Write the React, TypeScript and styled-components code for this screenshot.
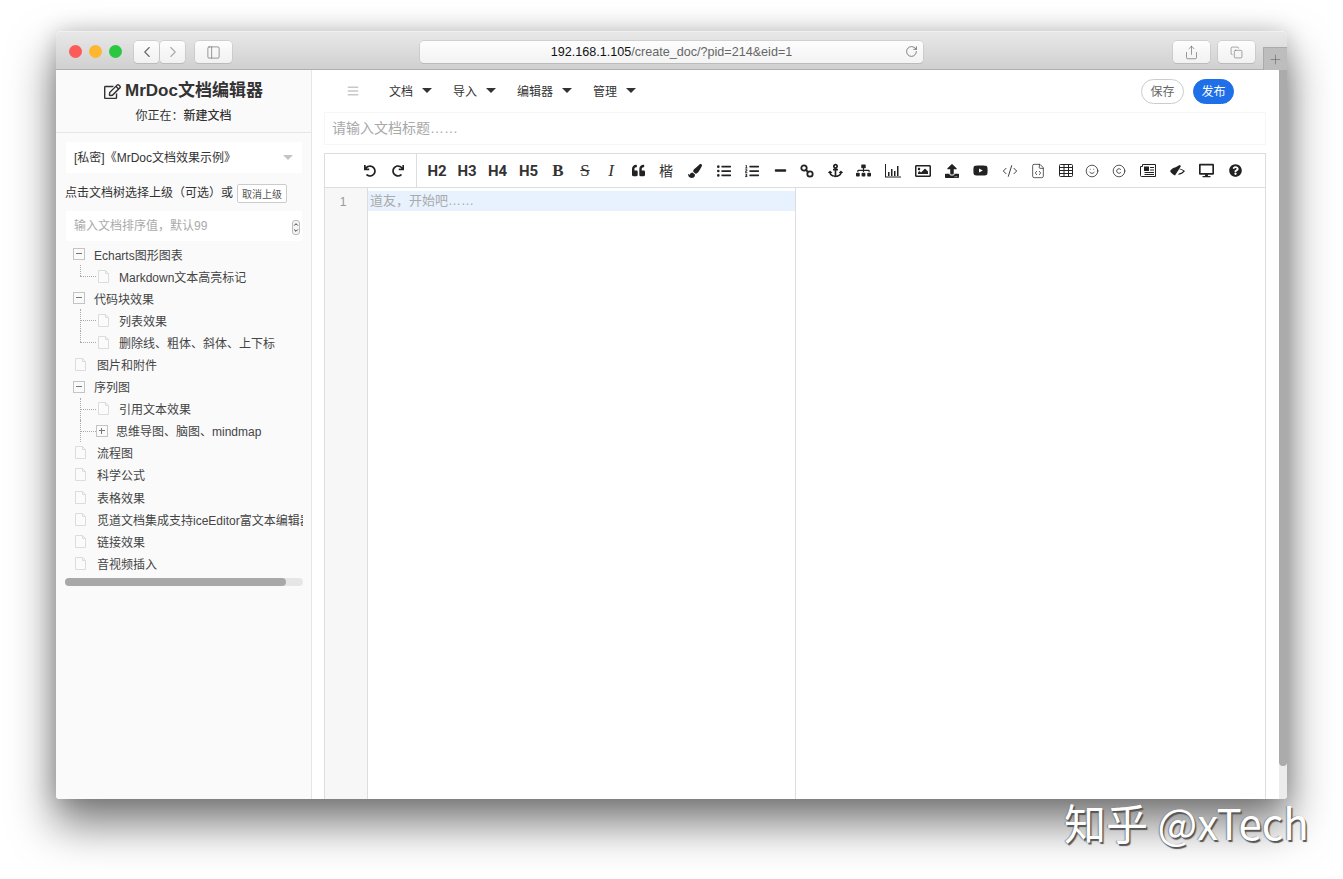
import React from "react";
import styled, { createGlobalStyle } from "styled-components";
import {
  FaUndo, FaRedo, FaQuoteLeft, FaPaintBrush, FaListUl, FaListOl,
  FaMinus, FaAnchor, FaSitemap, FaRegImage, FaUpload, FaYoutube,
  FaDesktop, FaQuestionCircle, FaBars, FaRegEdit,
} from "react-icons/fa";
import { CodeXml, ChevronLeft, ChevronRight, RotateCw, Plus, PanelLeft, Share, Copy, Smile, Copyright, FileCode } from "lucide-react";

const FONT = `"Liberation Sans", "Noto Sans CJK SC", sans-serif`;

const COLON = "\uFF1A";
const COMMA = "\uFF0C";
const LP = "\uFF08";
const RP = "\uFF09";

const Global = createGlobalStyle`
  html, body { margin: 0; padding: 0; height: 879px; background: #fff; overflow: hidden; }
  body { font-family: ${FONT}; font-size: 12px; color: #333; }
  * { box-sizing: border-box; }
`;

const Page = styled.div`
  position: relative;
  width: 1343px;
  height: 879px;
  padding: 31px 56px 0;
`;

const Window = styled.div`
  width: 1231px;
  height: 768px;
  display: flex;
  flex-direction: column;
  border-radius: 6px 6px 4px 4px;
  overflow: hidden;
  background: #fff;
`;

const WindowShadow = styled.div`
  border-radius: 6px 6px 4px 4px;
  box-shadow: 0 24px 44px 2px rgba(0, 0, 0, 0.5), 0 0 22px rgba(0, 0, 0, 0.18);
`;

const TitleBar = styled.div`
  height: 39px;
  flex: none;
  display: flex;
  align-items: flex-start;
  padding: 9px 0 0 13px;
  background: linear-gradient(#e8e8e8, #d0d0d0);
  border-top: 1px solid #f0f0f0;
  border-bottom: 1px solid #b0b0b0;
`;

const Lights = styled.div`
  display: flex;
  gap: 7px;
  margin-top: 4px;
  margin-right: 12px;
`;

const Light = styled.span<{ $c: string }>`
  width: 13px;
  height: 13px;
  border-radius: 50%;
  background: ${(p) => p.$c};
`;

const ChromeBtn = styled.div<{ $w: number; $ml?: number }>`
  width: ${(p) => p.$w}px;
  height: 22px;
  margin-left: ${(p) => p.$ml ?? 0}px;
  flex: none;
  display: flex;
  align-items: center;
  justify-content: center;
  border-radius: 4px;
  background: linear-gradient(#fdfdfd, #f1f1f1);
  box-shadow: 0 0 0 0.5px #bdbdbd, 0 1px 0 #b8b8b8;
  color: ${(p) => (p.$w === 25 ? "#6a6a6a" : "#5f5f5f")};
`;

const UrlBar = styled.div`
  position: relative;
  width: 503px;
  height: 22px;
  margin-left: 188px;
  flex: none;
  display: flex;
  align-items: center;
  justify-content: center;
  border-radius: 4px;
  background: linear-gradient(#fdfdfd, #f3f3f3);
  box-shadow: 0 0 0 0.5px #bdbdbd, 0 1px 0 #b8b8b8;
  font-size: 12.6px;
  color: #111;
`;

const UrlPath = styled.span`
  color: #666;
`;

const Reload = styled.span`
  position: absolute;
  right: 5px;
  top: 4px;
  color: #666;
  display: flex;
`;

const NewTab = styled.div`
  width: 24px;
  height: 23px;
  margin-left: 8px;
  margin-top: 6px;
  flex: none;
  display: flex;
  align-items: center;
  justify-content: center;
  background: #bdbdbd;
  border-left: 1px solid #aaa;
  border-top: 1px solid #aaa;
  color: #666;
`;

const Body = styled.div`
  flex: 1;
  min-height: 0;
  display: flex;
`;

const Sidebar = styled.aside`
  width: 256px;
  flex: none;
  background: #fafafa;
  border-right: 1px solid #e6e6e6;
  display: flex;
  flex-direction: column;
`;

const Brand = styled.header`
  height: 63px;
  flex: none;
  border-bottom: 1px solid #e6e6e6;
  display: flex;
  flex-direction: column;
  align-items: center;
  padding-top: 10px;
`;

const BrandTitle = styled.h1`
  margin: 0;
  font-size: 17px;
  line-height: 22px;
  font-weight: 700;
  color: #333;
  display: flex;
  align-items: center;
  gap: 4px;
`;

const BrandSub = styled.div`
  margin-top: 5px;
  font-size: 12px;
  line-height: 18px;
  color: #333;
  b { font-weight: 500; }
`;

const SideForm = styled.div`
  padding: 9px 9px 0 9px;
  display: flex;
  flex-direction: column;
`;

const SelectBox = styled.div`
  height: 31px;
  margin-left: 1px;
  padding: 0 8px 3px;
  background: #fff;
  display: flex;
  align-items: center;
  justify-content: space-between;
  color: #333;
`;

const SelectCaret = styled.span`
  width: 0;
  height: 0;
  margin: 3px 1px 0 0;
  border-left: 5px solid transparent;
  border-right: 5px solid transparent;
  border-top: 5px solid #c4c4c4;
`;

const ParentRow = styled.div`
  height: 20px;
  margin-top: 10px;
  display: flex;
  align-items: center;
  gap: 4px;
  white-space: nowrap;
  color: #333;
`;

const ParentLabel = styled.span`
  margin-bottom: 3px;
`;

const CancelBtn = styled.button`
  width: 50px;
  height: 19px;
  padding: 0;
  border: 1px solid #ccc;
  border-radius: 2px;
  background: #fff;
  font-family: ${FONT};
  font-size: 10px;
  color: #555;
`;

const SortBox = styled.div`
  height: 30px;
  margin-top: 8px;
  margin-left: 1px;
  padding: 0 2px 0 8px;
  background: #fff;
  display: flex;
  align-items: center;
  justify-content: space-between;
  color: #aaa;
`;

const SortText = styled.span`
  margin-bottom: 4px;
`;

const Spinner = styled.span`
  width: 8px;
  height: 15px;
  margin-top: 3px;
  border: 1px solid #bbb;
  border-radius: 3px;
  background: #f4f4f4;
  display: flex;
`;

const Tree = styled.div`
  margin-top: 2px;
  padding-left: 10px;
  width: 247px;
  overflow: hidden;
`;

const Row = styled.div`
  height: 22.1px;
  display: flex;
  align-items: center;
  white-space: nowrap;
  color: #444;
`;

const Guide = styled.span<{ $last?: boolean }>`
  position: relative;
  align-self: stretch;
  width: 16px;
  margin-left: 14px;
  flex: none;
  &::before {
    content: "";
    position: absolute;
    left: 0;
    top: 0;
    bottom: ${(p) => (p.$last ? "50%" : "0")};
    border-left: 1px dotted #aaa;
  }
  &::after {
    content: "";
    position: absolute;
    left: 0;
    right: 0;
    top: 50%;
    border-top: 1px dotted #aaa;
  }
`;

const Switch = styled.span<{ $ml: number; $gap: number }>`
  width: 12px;
  height: 12px;
  margin-left: ${(p) => p.$ml}px;
  margin-right: ${(p) => p.$gap}px;
  flex: none;
  position: relative;
  border: 1px solid #c4c4c4;
  background: #fafafa;
  &::before {
    content: "";
    position: absolute;
    left: 2px;
    right: 2px;
    top: 4px;
    height: 1px;
    background: #777;
  }
`;

const SwitchPlus = styled(Switch)`
  &::after {
    content: "";
    position: absolute;
    top: 2px;
    bottom: 2px;
    left: 4px;
    width: 1px;
    background: #777;
  }
`;

const PageIcon = styled.svg<{ $ml: number; $gap: number }>`
  width: 11px;
  height: 13px;
  margin-left: ${(p) => p.$ml}px;
  margin-right: ${(p) => p.$gap}px;
  flex: none;
`;

const HScroll = styled.div`
  margin: 4px 0 0 9px;
  width: 238px;
  height: 8px;
  border-radius: 4px;
  background: #e6e6e6;
`;

const HThumb = styled.div`
  height: 100%;
  border-radius: 4px;
  background: #a8a8a8;
`;

const Main = styled.main`
  flex: 1;
  min-width: 0;
  padding: 0 13px 0 12px;
  display: flex;
  flex-direction: column;
  background: #fff;
`;

const MenuBar = styled.nav`
  height: 42px;
  flex: none;
  display: flex;
  align-items: center;
  padding-left: 23px;
  color: #333;
`;

const Burger = styled.span`
  color: #c8c8c8;
  display: flex;
  margin-right: 30px;
`;

const MenuItem = styled.span<{ $w: number }>`
  width: ${(p) => p.$w}px;
  padding-bottom: 2px;
  display: flex;
  align-items: center;
  gap: 9px;
  color: #333;
`;

const MenuCaret = styled.i`
  width: 0;
  height: 0;
  border-left: 5px solid transparent;
  border-right: 5px solid transparent;
  border-top: 5px solid #333;
`;

const Actions = styled.div`
  margin-left: auto;
  margin-right: 32px;
  display: flex;
  gap: 9px;
`;

const Pill = styled.button<{ $primary?: boolean }>`
  width: ${(p) => (p.$primary ? 41 : 43)}px;
  height: 25px;
  padding: 0 0 2px;
  border-radius: 13px;
  font-family: ${FONT};
  font-size: 12px;
  border: 1px solid ${(p) => (p.$primary ? "#1e6fe8" : "#ccc")};
  background: ${(p) => (p.$primary ? "#1e6fe8" : "#fff")};
  color: ${(p) => (p.$primary ? "#fff" : "#666")};
`;

const TitleInput = styled.div`
  height: 33px;
  flex: none;
  padding: 0 0 3px 7px;
  display: flex;
  align-items: center;
  font-size: 14px;
  color: #a8a8a8;
  border: 1px solid #f6f6f6;
`;

const Editor = styled.section`
  flex: 1;
  min-height: 0;
  margin-top: 8px;
  display: flex;
  flex-direction: column;
  border: 1px solid #ddd;
  border-bottom: 0;
`;

const Toolbar = styled.div`
  height: 34px;
  flex: none;
  display: flex;
  align-items: stretch;
  padding-left: 31px;
  border-bottom: 1px solid #ddd;
  color: #222;
`;

const Tool = styled.span<{ $w: number }>`
  width: ${(p) => p.$w}px;
  flex: none;
  display: flex;
  align-items: center;
  justify-content: center;
`;

const ToolText = styled(Tool)`
  font-family: Roboto, sans-serif;
  font-size: 15px;
  font-weight: 700;
  color: #333;
`;

const ToolSerif = styled(Tool)<{ $italic?: boolean; $strike?: boolean }>`
  font-family: "Liberation Serif", serif;
  font-size: 17px;
  font-weight: ${(p) => (p.$strike || p.$italic ? 400 : 700)};
  font-style: ${(p) => (p.$italic ? "italic" : "normal")};
  text-decoration: ${(p) => (p.$strike ? "line-through" : "none")};
  color: #333;
`;

const ToolKai = styled(Tool)`
  font-size: 14px;
  padding-bottom: 2px;
  color: #333;
`;

const ToolSep = styled.span`
  width: 1px;
  margin: 0 5px 0 5px;
  background: #ddd;
`;

const Panes = styled.div`
  flex: 1;
  min-height: 0;
  display: flex;
`;

const Gutter = styled.div`
  width: 43px;
  flex: none;
  padding: 4px 6px 0 0;
  background: #f7f7f7;
  border-right: 1px solid #ddd;
  color: #999;
  text-align: center;
  line-height: 20px;
`;

const CodePane = styled.div`
  width: 428px;
  flex: none;
  padding-top: 3px;
  border-right: 1px solid #ddd;
`;

const ActiveLine = styled.div`
  height: 20px;
  padding-left: 2px;
  background: #e8f2fe;
  color: #aaa;
  font-size: 13px;
  line-height: 20px;
`;

const Preview = styled.div`
  flex: 1;
  background: #fff;
`;

const VScroll = styled.div`
  width: 8px;
  flex: none;
  background: #ececec;
`;

const VThumb = styled.div`
  height: 696px;
  border-radius: 0 0 4px 4px;
  background: #ababab;
`;

const Watermark = styled.div`
  position: absolute;
  left: 1064px;
  top: 794px;
  font-family: "Noto Sans CJK SC", sans-serif;
  font-size: 42px;
  line-height: 56px;
  white-space: nowrap;
  color: #fff;
  text-shadow: 1.5px 1.5px 1px #555, -1px 0 1px #888;
`;

const Page16 = ({ ml, gap }: { ml: number; gap: number }) => (
  <PageIcon $ml={ml} $gap={gap} viewBox="0 0 11 13" fill="none">
    <path d="M.5.5h7l3 3v9H.5z" fill="#fbfbfb" stroke="#dcdcdc" />
    <path d="M7.5.5v3h3" stroke="#dcdcdc" />
  </PageIcon>
);

type Node =
  | { t: string; k: "folder" }
  | { t: string; k: "leaf" }
  | { t: string; k: "child"; last?: boolean }
  | { t: string; k: "childPlus" };

const nodes: Node[] = [
  { t: "Echarts图形图表", k: "folder" },
  { t: "Markdown文本高亮标记", k: "child", last: true },
  { t: "代码块效果", k: "folder" },
  { t: "列表效果", k: "child" },
  { t: "删除线、粗体、斜体、上下标", k: "child", last: true },
  { t: "图片和附件", k: "leaf" },
  { t: "序列图", k: "folder" },
  { t: "引用文本效果", k: "child" },
  { t: "思维导图、脑图、mindmap", k: "childPlus" },
  { t: "流程图", k: "leaf" },
  { t: "科学公式", k: "leaf" },
  { t: "表格效果", k: "leaf" },
  { t: "觅道文档集成支持iceEditor富文本编辑器", k: "leaf" },
  { t: "链接效果", k: "leaf" },
  { t: "音视频插入", k: "leaf" },
];

const TreeRow = ({ n }: { n: Node }) => (
  <Row>
    {n.k === "folder" && <Switch $ml={7} $gap={9} />}
    {n.k === "leaf" && <Page16 ml={9} gap={11} />}
    {n.k === "child" && (
      <>
        <Guide $last={n.last} />
        <Page16 ml={2} gap={10} />
      </>
    )}
    {n.k === "childPlus" && (
      <>
        <Guide />
        <SwitchPlus $ml={0} $gap={8} />
      </>
    )}
    {n.t}
  </Row>
);

const SpinArrows = () => (
  <svg width="6" height="13" viewBox="0 0 6 13" fill="none" stroke="#333" strokeWidth="1">
    <path d="M1.200 4.500 3 2.700l1.800 1.800M1.200 8.500 3 10.300l1.800-1.800" />
  </svg>
);

const LinkIcon = () => (
  <svg width="14" height="14" viewBox="0 0 14 14" fill="none" stroke="currentColor" strokeWidth="1.8">
    <circle cx="4" cy="4" r="2.700" />
    <circle cx="10" cy="10" r="2.700" />
    <path d="M5.500 5.500 8.500 8.500" />
  </svg>
);

const ChartIcon = () => (
  <svg width="16" height="14" viewBox="0 0 16 14" fill="currentColor">
    <path d="M0 0h1v12.500h16v1H0z" />
    <path d="M3 8h1.500v4H3zM6 5h1.500v7H6zM9 7h1.500v5H9zM12 2h1.500v10H12z" />
  </svg>
);

const TableIcon = () => (
  <svg width="14" height="13" viewBox="0 0 14 13" fill="none" stroke="currentColor" strokeWidth="1">
    <rect x="0.500" y="0.500" width="13" height="12" rx="1" />
    <path d="M.5 3.500h13M.5 6.500h13M.5 9.500h13M5 .5v12M9.500.5v12" />
  </svg>
);

const NewsIcon = () => (
  <svg width="16" height="13" viewBox="0 0 16 13" fill="none" stroke="currentColor" strokeWidth="1">
    <path d="M2.500.5h13v12H1.500a1 1 0 0 1-1-1V2.500h2z" />
    <rect x="4.500" y="3" width="4" height="3.500" fill="currentColor" />
    <path d="M10 3.500h4M10 6h4M4.500 8.500h9.500M4.500 10.500h9.500" />
  </svg>
);

const EyeCheck = () => (
  <svg width="15" height="13" viewBox="0 0 15 13" fill="currentColor">
    <path d="M0 7c1.400-1.900 3.300-3.300 5.700-3.700L9.500 1 11 2 5 11.500C3 10.800 1.200 9.200 0 7z" />
    <path d="M9.500 4.500c2 .6 4 1.200 5.500 2.500-1.600 2.200-4 3.600-7 3.800l.9-1.400c2.200-.4 3.500-1.400 4.400-2.400-1-.8-2.300-1.300-3.800-1.700z" />
  </svg>
);

const icons: [React.ReactNode, number][] = [
  [<FaPaintBrush size={14} />, 30],
  [<FaListUl size={14} />, 28],
  [<FaListOl size={14} />, 28],
  [<FaMinus size={13} />, 28],
  [<LinkIcon />, 26],
  [<FaAnchor size={15} />, 30],
  [<FaSitemap size={15} />, 27],
  [<ChartIcon />, 31],
  [<FaRegImage size={16} />, 30],
  [<FaUpload size={14} />, 28],
  [<FaYoutube size={15} />, 29],
  [<CodeXml size={16} strokeWidth={1.3} />, 29],
  [<FileCode size={16} strokeWidth={1.1} />, 28],
  [<TableIcon />, 27],
  [<Smile size={14} strokeWidth={1.3} />, 26],
  [<Copyright size={14} strokeWidth={1.3} />, 28],
  [<NewsIcon />, 30],
  [<EyeCheck />, 29],
  [<FaDesktop size={15} />, 29],
  [<FaQuestionCircle size={13} />, 28],
];

export default function App() {
  return (
    <Page>
      <Global />
      <WindowShadow>
        <Window>
          <TitleBar>
            <Lights>
              <Light $c="#fc5b57" />
              <Light $c="#fdb72f" />
              <Light $c="#2ac840" />
            </Lights>
            <ChromeBtn $w={25}><ChevronLeft size={18} strokeWidth={1.5} /></ChromeBtn>
            <ChromeBtn $w={25} $ml={1}><ChevronRight size={18} strokeWidth={1.5} color="#aaa" /></ChromeBtn>
            <ChromeBtn $w={37} $ml={10}><PanelLeft size={15} strokeWidth={1} /></ChromeBtn>
            <UrlBar>
              <span>192.168.1.105<UrlPath>/create_doc/?pid=214&amp;eid=1</UrlPath></span>
              <Reload><RotateCw size={13} strokeWidth={1.5} /></Reload>
            </UrlBar>
            <ChromeBtn $w={37} $ml={250}><Share size={15} strokeWidth={1} /></ChromeBtn>
            <ChromeBtn $w={37} $ml={8}><Copy size={13} strokeWidth={1} /></ChromeBtn>
            <NewTab><Plus size={15} strokeWidth={1} /></NewTab>
          </TitleBar>
          <Body>
            <Sidebar>
              <Brand>
                <BrandTitle><FaRegEdit size={17} />MrDoc文档编辑器</BrandTitle>
                <BrandSub>{`你正在${COLON}`}<b>新建文档</b></BrandSub>
              </Brand>
              <SideForm>
                <SelectBox>[私密]《MrDoc文档效果示例》<SelectCaret /></SelectBox>
                <ParentRow><ParentLabel>{`点击文档树选择上级${LP}可选${RP}或`}</ParentLabel><CancelBtn>取消上级</CancelBtn></ParentRow>
                <SortBox><SortText>{`输入文档排序值${COMMA}默认99`}</SortText><Spinner><SpinArrows /></Spinner></SortBox>
              </SideForm>
              <Tree>
                {nodes.map((n) => <TreeRow key={n.t} n={n} />)}
              </Tree>
              <HScroll><HThumb style={{ width: `${(221 / 238) * 100}%` }} /></HScroll>
            </Sidebar>
            <Main>
              <MenuBar>
                <Burger><FaBars size={12} /></Burger>
                <MenuItem $w={64}>文档<MenuCaret /></MenuItem>
                <MenuItem $w={64}>导入<MenuCaret /></MenuItem>
                <MenuItem $w={76}>编辑器<MenuCaret /></MenuItem>
                <MenuItem $w={64}>管理<MenuCaret /></MenuItem>
                <Actions>
                  <Pill>保存</Pill>
                  <Pill $primary>发布</Pill>
                </Actions>
              </MenuBar>
              <TitleInput>请输入文档标题……</TitleInput>
              <Editor>
                <Toolbar>
                  <Tool $w={28}><FaUndo size={12} /></Tool>
                  <Tool $w={27}><FaRedo size={12} /></Tool>
                  <ToolSep />
                  <ToolText $w={30}>H2</ToolText>
                  <ToolText $w={30}>H3</ToolText>
                  <ToolText $w={31}>H4</ToolText>
                  <ToolText $w={31}>H5</ToolText>
                  <ToolSerif $w={28}>B</ToolSerif>
                  <ToolSerif $w={26} $strike>S</ToolSerif>
                  <ToolSerif $w={26} $italic>I</ToolSerif>
                  <Tool $w={28}><FaQuoteLeft size={13} /></Tool>
                  <ToolKai $w={28}>楷</ToolKai>
                  {icons.map(([ic, w], i) => <Tool key={i} $w={w}>{ic}</Tool>)}
                </Toolbar>
                <Panes>
                  <Gutter>1</Gutter>
                  <CodePane><ActiveLine>{`道友${COMMA}开始吧……`}</ActiveLine></CodePane>
                  <Preview />
                </Panes>
              </Editor>
            </Main>
            <VScroll><VThumb /></VScroll>
          </Body>
        </Window>
      </WindowShadow>
      <Watermark>知乎 @xTech</Watermark>
    </Page>
  );
}
